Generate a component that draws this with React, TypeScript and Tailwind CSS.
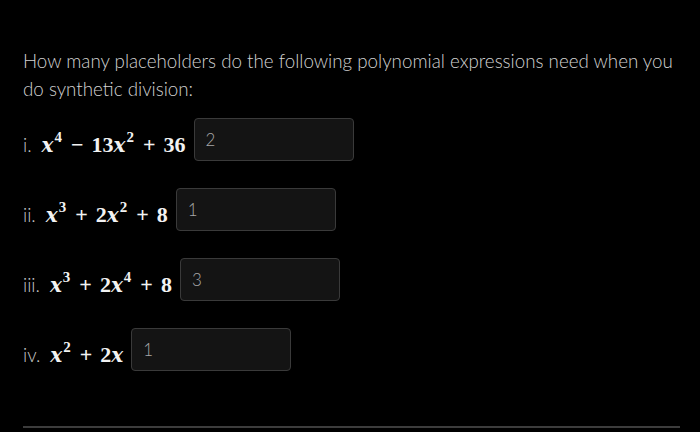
import React from "react";

const serif = '"Liberation Serif", "DejaVu Serif", serif';

const X = () => (
  <span className="italic font-bold" style={{ fontFamily: '"DejaVu Serif", "Liberation Serif", serif', fontSize: "20px" }}>
    x
  </span>
);
const Sup = ({ children }: { children: React.ReactNode }) => (
  <span className="relative top-[-10px] text-[15px] ml-[1px] mr-[1px]" style={{ fontFamily: serif }}>
    {children}
  </span>
);
const Op = ({ children }: { children: React.ReactNode }) => (
  <span className="mx-[8px]">{children}</span>
);

function Row({ label, math, value }: { label: string; math: React.ReactNode; value: string }) {
  return (
    <div className="flex items-center h-[43px]">
      <div className="flex items-baseline pt-[10px]">
        <span className="text-[18.75px] font-light text-[#c8c8c8] mr-[10px]">{label}</span>
        <span
          className="text-[22px] font-bold text-[#f2f2f2] whitespace-nowrap"
          style={{ fontFamily: serif }}
        >
          {math}
        </span>
      </div>
      <div className="ml-[8px] w-[160px] h-[43px] rounded-[4px] border border-[#3a3a3a] bg-[#141414] flex items-center pl-[11px] text-[17px] font-light text-[#a8a8a8]">
        {value}
      </div>
    </div>
  );
}

export default function App() {
  return (
    <div
      className="w-[700px] h-[432px] bg-black overflow-hidden pt-[47px] pl-[23px] pr-[20px]"
      style={{ fontFamily: 'Lato, "Open Sans", sans-serif' }}
    >
      <p className="text-[18.75px] leading-[28px] text-[#d2d2d2] font-light">
        How many placeholders do the following polynomial expressions need when you do synthetic division:
      </p>
      <div className="mt-[15px] flex flex-col gap-[27px]">
        <Row
          label="i."
          value="2"
          math={
            <>
              <X />
              <Sup>4</Sup>
              <Op>−</Op>13<X />
              <Sup>2</Sup>
              <Op>+</Op>36
            </>
          }
        />
        <Row
          label="ii."
          value="1"
          math={
            <>
              <X />
              <Sup>3</Sup>
              <Op>+</Op>2<X />
              <Sup>2</Sup>
              <Op>+</Op>8
            </>
          }
        />
        <Row
          label="iii."
          value="3"
          math={
            <>
              <X />
              <Sup>3</Sup>
              <Op>+</Op>2<X />
              <Sup>4</Sup>
              <Op>+</Op>8
            </>
          }
        />
        <Row
          label="iv."
          value="1"
          math={
            <>
              <X />
              <Sup>2</Sup>
              <Op>+</Op>2<X />
            </>
          }
        />
      </div>
      <div className="mt-[55px] h-[2px] w-[657px] bg-[#3c3c3c]" />
    </div>
  );
}
